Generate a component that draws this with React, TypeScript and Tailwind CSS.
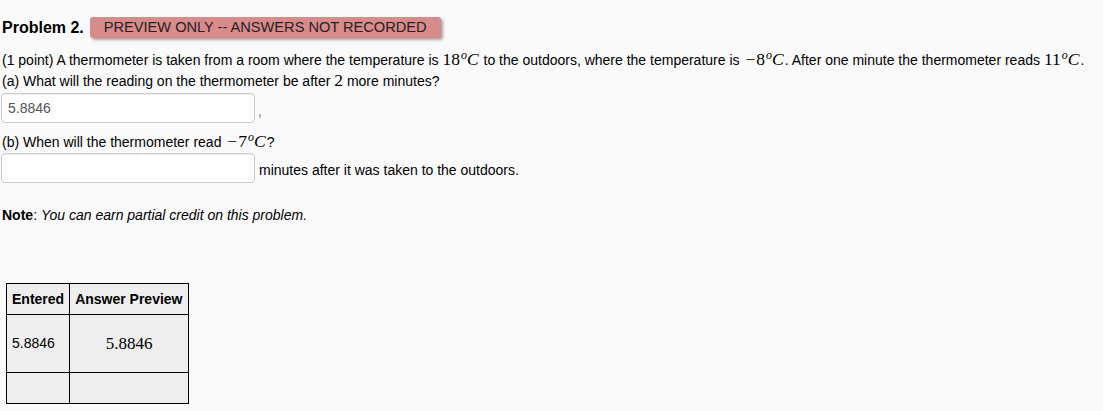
import React from 'react';

const serif = "font-['Liberation_Serif','DejaVu_Serif',serif]";

function Deg({ n, neg }: { n: string; neg?: boolean }) {
  return (
    <span className={`${serif} whitespace-nowrap text-[17.5px]`}>
      {neg && <span className="ml-[2px] mr-[1px]">−</span>}
      <span>{n}</span>
      <span className="relative -top-[6px] ml-[1px] text-[12px] italic">o</span>
      <span className="pr-[1px] italic">C</span>
    </span>
  );
}

function AnswerInput({ value }: { value?: string }) {
  return (
    <div className="box-border flex h-[30px] w-[254px] items-center rounded-[4px] border border-[#cccccc] bg-white px-[6px] text-[14px] text-[#555555] shadow-[inset_0_1px_1px_rgba(0,0,0,0.075)]">
      {value}
    </div>
  );
}

export default function App() {
  return (
    <div className="min-h-[411px] w-[1103px] bg-[#fafafa] pl-[1px] font-['Liberation_Sans',Arial,sans-serif] text-[14px] leading-[19px] text-black">
      <div className="flex items-center pt-[17px] pl-[1px]">
        <span className="text-[16px] font-bold leading-[21px]">Problem 2.</span>
        <span className="ml-[6px] rounded-[3px] bg-[#d98b8b] px-[14px] text-[14.6px] leading-[21px] text-[#222] shadow-[2px_2px_3px_rgba(0,0,0,0.35)]">
          PREVIEW ONLY -- ANSWERS NOT RECORDED
        </span>
      </div>

      <div className="mt-[12px] pl-[1px]">
        <div>
          (1 point) A thermometer is taken from a room where the temperature is <Deg n="18" /> to the
          outdoors, where the temperature is <Deg n="8" neg />. After one minute the thermometer reads{' '}
          <Deg n="11" />.
        </div>
        <div>
          (a) What will the reading on the thermometer be after{' '}
          <span className={`${serif} text-[17.5px]`}>2</span> more minutes?
        </div>
      </div>

      <div className="mt-[2px] flex items-end">
        <AnswerInput value="5.8846" />
        <span className="ml-[3px] mb-[2px] text-[#777]">,</span>
      </div>

      <div className="mt-[9px] pl-[1px]">
        (b) When will the thermometer read <Deg n="7" neg />?
      </div>

      <div className="flex items-end">
        <AnswerInput />
        <span className="ml-[4px] mb-[3px]">minutes after it was taken to the outdoors.</span>
      </div>

      <div className="mt-[23px] pl-[1px]">
        <span className="font-bold">Note</span>: <span className="italic">You can earn partial credit on this problem.</span>
      </div>

      <table className="mt-[58px] ml-[5px] border-collapse border border-black bg-[#eeeeee] text-[14px]">
        <tbody>
          <tr className="h-[31px]">
            <th className="w-[63px] border border-black px-[5px] text-left font-bold">Entered</th>
            <th className="w-[119px] border border-black px-[5px] text-left font-bold">Answer Preview</th>
          </tr>
          <tr className="h-[58px]">
            <td className="border border-black px-[5px]">5.8846</td>
            <td className={`border border-black text-center ${serif} text-[17px]`}>5.8846</td>
          </tr>
          <tr className="h-[31px]">
            <td className="border border-black"></td>
            <td className="border border-black"></td>
          </tr>
        </tbody>
      </table>
    </div>
  );
}
